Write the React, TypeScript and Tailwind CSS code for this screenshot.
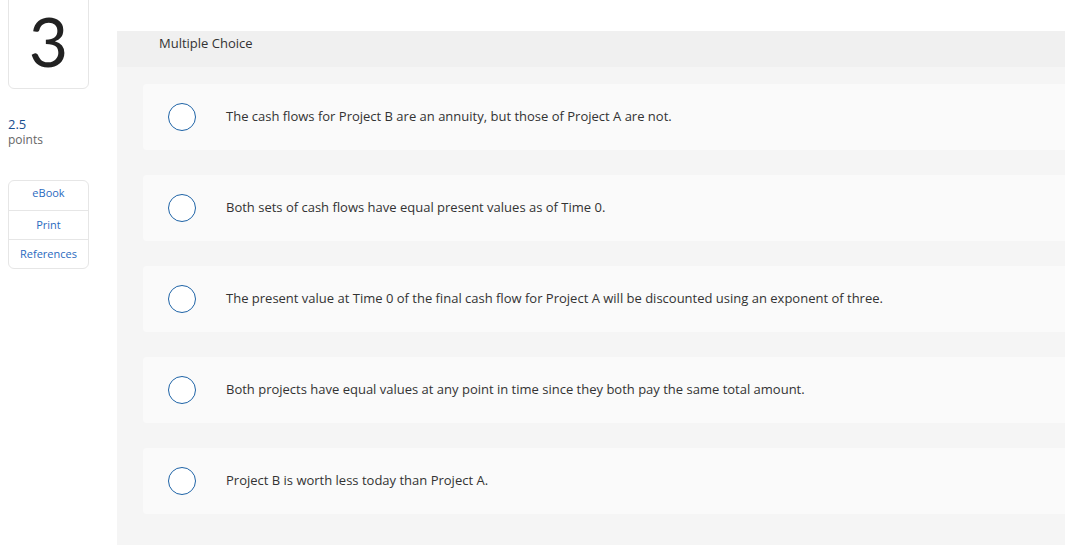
const options = [
  "The cash flows for Project B are an annuity, but those of Project A are not.",
  "Both sets of cash flows have equal present values as of Time 0.",
  "The present value at Time 0 of the final cash flow for Project A will be discounted using an exponent of three.",
  "Both projects have equal values at any point in time since they both pay the same total amount.",
  "Project B is worth less today than Project A.",
];

export default function App() {
  return (
    <div
      className="flex h-[545px] w-[1065px] overflow-hidden bg-white text-[#333]"
      style={{ fontFamily: '"Open Sans", "Liberation Sans", sans-serif' }}
    >
      {/* Sidebar */}
      <div className="w-[117px] shrink-0 pl-2">
        <div className="-mt-2 flex h-[97px] w-[81px] items-center justify-center rounded-md border border-[#e6e6e6]">
          <span
            className="text-[68px] leading-none text-[#222]"
            style={{ fontFamily: 'Lato, "Open Sans", sans-serif', fontWeight: 400 }}
          >
            3
          </span>
        </div>
        <div className="mt-[27px] text-[13px] leading-[16px]">
          <div className="text-[#1a4f8f]">2.5</div>
          <div className="text-[12px] text-[#666]">points</div>
        </div>
        <div className="mt-[32px] w-[81px] overflow-hidden rounded-md border border-[#e6e6e6] text-center text-[11px] text-[#2a6ac0]">
          <div className="flex h-[30px] items-center justify-center border-b border-[#e6e6e6] pb-1">eBook</div>
          <div className="flex h-[29px] items-center justify-center border-b border-[#e6e6e6]">Print</div>
          <div className="flex h-[28px] items-center justify-center">References</div>
        </div>
      </div>

      {/* Main */}
      <div className="mt-[31px] flex-1 bg-[#f5f5f5]">
        <div className="h-[36px] bg-[#f0f0f0] pl-[42px] pt-[3px] text-[13px] leading-[18px] text-[#333]">
          Multiple Choice
        </div>
        <div className="flex flex-col gap-[25px] pl-[26px] pt-[17px]">
          {options.map((text) => (
            <div key={text} className="flex h-[66px] items-center rounded-l-sm bg-[#fafafa]">
              <div className="ml-[25px] h-[28px] w-[28px] shrink-0 rounded-full border-[1.5px] border-[#1e63a6] bg-white" />
              <div className="ml-[30px] text-[13px] text-[#333]">{text}</div>
            </div>
          ))}
        </div>
      </div>
    </div>
  );
}
